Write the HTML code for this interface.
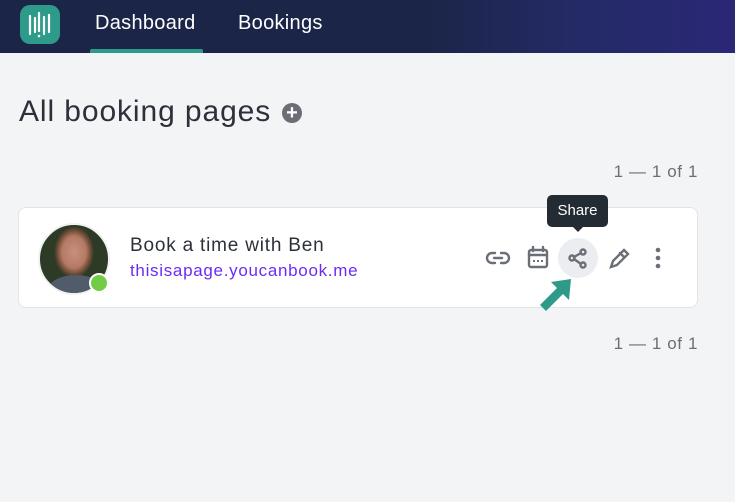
<html><head><style>
body{margin:0;width:735px;height:502px;background:#f3f4f6;font-family:"Liberation Sans",sans-serif;position:relative;overflow:hidden}
.hdr{position:absolute;left:0;top:0;width:735px;height:53px;background:linear-gradient(90deg,#1b2547 0,#1b2547 420px,#232a63 560px,#2a2877 735px)}
.logo{position:absolute;left:20px;top:5px;width:40px;height:39px;border-radius:10px;background:#2e9b8a}
.nav{position:absolute;top:12px;color:#fff;font-size:20px;letter-spacing:.3px}
.ul{position:absolute;left:90px;top:49px;width:113px;height:4px;background:#2e9b8a;border-radius:2px 2px 0 0}
h1{position:absolute;left:19px;top:95px;margin:0;font-weight:normal;font-size:30px;color:#2c3038;letter-spacing:.9px}
.plus{position:absolute;left:282px;top:103px;width:20px;height:20px;border-radius:50%;background:#6b6f75;color:#fff;font-size:20px;line-height:20px;text-align:center;font-weight:bold}
.pg{position:absolute;right:37px;color:#6b7078;font-size:17px;letter-spacing:.6px}
.card{position:absolute;left:18px;top:207px;width:680px;height:101px;background:#fff;border:1px solid #e2e4e8;border-radius:8px;box-sizing:border-box}
.av{position:absolute;left:38px;top:223px;width:72px;height:72px;border-radius:50%;background:radial-gradient(ellipse 20px 26px at 50% 40%,#c99080 0,#b57a64 60%,#6b4a34 85%,transparent 100%),#2c3a26;border:2px solid #f2f2f2;box-sizing:border-box;overflow:hidden}
.shirt{position:absolute;left:8px;top:50px;width:56px;height:30px;border-radius:50% 50% 0 0;background:#505c6a}
.dot{position:absolute;left:89px;top:273px;width:20px;height:20px;border-radius:50%;background:#72cc45;border:2px solid #fff;box-sizing:border-box}
.t1{position:absolute;left:130px;top:235px;font-size:19px;color:#2c3038;letter-spacing:.8px}
.t2{position:absolute;left:130px;top:261px;font-size:17px;color:#6a2cf4;letter-spacing:.7px}
.tip{position:absolute;left:547px;top:195px;width:61px;height:32px;background:#232b33;border-radius:5px;color:#fff;font-size:15px;text-align:center;line-height:32px}
.tip:after{content:"";position:absolute;left:26px;bottom:-5px;border:5px solid transparent;border-top-color:#232b33;border-bottom:0}
.sh{position:absolute;left:558px;top:238px;width:40px;height:40px;border-radius:50%;background:#ebedf0}
</style></head><body>
<div class="hdr"></div>
<div class="logo"><svg width="40" height="39"><g stroke="#fff" stroke-width="2.2" stroke-linecap="round"><line x1="10" y1="11" x2="10" y2="29"/><line x1="15" y1="13" x2="15" y2="27"/><line x1="19" y1="8" x2="19" y2="26"/><line x1="24" y1="12" x2="24" y2="29"/><line x1="29" y1="10" x2="29" y2="27"/></g><circle cx="19" cy="31" r="1.3" fill="#fff"/></svg></div>
<div class="nav" style="left:95px">Dashboard</div>
<div class="nav" style="left:238px">Bookings</div>
<div class="ul"></div>
<h1>All booking pages</h1>
<div class="plus">+</div>
<div class="pg" style="top:162px">1 — 1 of 1</div>
<div class="pg" style="top:334px">1 — 1 of 1</div>
<div class="card"></div>
<div class="av"><div class="shirt"></div></div>
<div class="dot"></div>
<div class="t1">Book a time with Ben</div>
<div class="t2">thisisapage.youcanbook.me</div>
<div class="sh"></div>
<svg style="position:absolute;left:0;top:0" width="735" height="502">
<g fill="none" stroke="#6b7078" stroke-width="2.4" stroke-linecap="round">
<path d="M495 253h-3a5 5 0 0 0 0 10h3M501 253h3a5 5 0 0 1 0 10h-3M494 258h8"/>
<rect x="529" y="250" width="18" height="17" rx="2"/><path d="M529 255h18M533 247v4M543 247v4"/>
<circle cx="572" cy="258" r="2.5"/><circle cx="583" cy="252" r="2.5"/><circle cx="583" cy="265" r="2.5"/><path d="M574 257l7-4M574 259l7 5"/>
<path d="M611 267l2-6 11-11 4 4-11 11-6 2zM620 253l4 4"/>
</g>
<g fill="#6b7078"><rect x="533" y="260" width="2" height="2"/><rect x="537" y="260" width="2" height="2"/><rect x="541" y="260" width="2" height="2"/>
<circle cx="658" cy="250" r="2.3"/><circle cx="658" cy="258" r="2.3"/><circle cx="658" cy="266" r="2.3"/></g>
<path d="M571 279l-2 21-6-6-17 17-6-6 17-17-6-6z" fill="#2e9b8a"/>
</svg>
<div class="tip">Share</div>
</body></html>
